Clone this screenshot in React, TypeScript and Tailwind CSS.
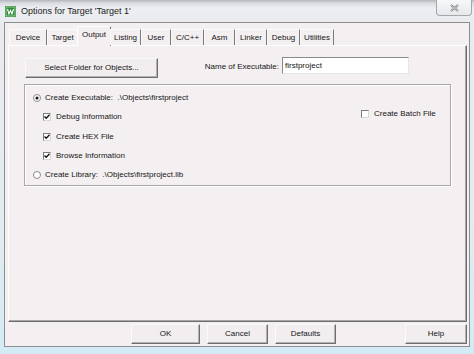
import React from "react";

const font = "font-['Liberation_Sans',Arial,sans-serif]";

function Check({ checked }: { checked: boolean }) {
  return (
    <div className="w-[8px] h-[8px] bg-white border border-t-[#7c7c7c] border-l-[#7c7c7c] border-r-[#d8d8d8] border-b-[#d8d8d8] flex items-center justify-center shrink-0">
      {checked && (
        <svg width="6" height="6" viewBox="0 0 6 6">
          <path d="M0.5 2.5 L2.2 4.3 L5.5 0.8" stroke="#111" strokeWidth="1.3" fill="none" />
        </svg>
      )}
    </div>
  );
}

function Radio({ checked }: { checked: boolean }) {
  return (
    <svg width="8" height="8" viewBox="0 0 8 8" className="shrink-0">
      <circle cx="4" cy="4" r="3.5" fill="#fff" stroke="#8a8a8a" strokeWidth="1" />
      {checked && <circle cx="4" cy="4" r="1.5" fill="#111" />}
    </svg>
  );
}

function Button({ label, w }: { label: string; w: string }) {
  return (
    <div
      className={`${w} h-[20px] flex items-center justify-center bg-[#f2eef0] border border-t-[#fbfafa] border-l-[#fbfafa] border-r-[#6f6f6f] border-b-[#6f6f6f] shadow-[inset_-1px_-1px_0_#b4b0b2]`}
    >
      {label}
    </div>
  );
}

const tabs = [
  { label: "Device", w: "w-[38px]" },
  { label: "Target", w: "w-[31px]" },
  { label: "Output", w: "w-[34px]", sel: true },
  { label: "Listing", w: "w-[31px]" },
  { label: "User", w: "w-[30px]" },
  { label: "C/C++", w: "w-[33px]" },
  { label: "Asm", w: "w-[31px]" },
  { label: "Linker", w: "w-[32px]" },
  { label: "Debug", w: "w-[33px]" },
  { label: "Utilities", w: "w-[34px]" },
];

export default function App() {
  return (
    <div className={`w-[474px] h-[354px] overflow-hidden flex flex-col bg-[linear-gradient(to_bottom,#e9ebee_0%,#e4ecf0_60%,#d3ebf5_100%)] text-[8px] text-[#151515] ${font}`}>
      {/* Title bar */}
      <div className="h-[22px] shrink-0 flex items-start bg-[linear-gradient(to_bottom,#b3b7bd_0px,#d9dce0_3px,#eceef1_8px,#e9ebee_22px)]">
        <div className="mt-[6px] ml-[5px] w-[11px] h-[11px]">
          <svg width="11" height="11" viewBox="0 0 11 11">
            <rect x="0" y="0" width="11" height="11" fill="#2f8a3a" />
            <rect x="1" y="1" width="9" height="9" fill="none" stroke="#a8d8a8" strokeWidth="0.8" />
            <path d="M2.5 3 L4 8 L5.5 4.5 L7 8 L8.5 3" stroke="#fff" strokeWidth="1.1" fill="none" />
          </svg>
        </div>
        <div className="mt-[6px] ml-[5px] text-[9px] leading-[11px] text-[#1c1c1c]">Options for Target 'Target 1'</div>
        <div className="ml-auto mr-[2px] w-[36px] h-[16px] rounded-b-[4px] border border-t-0 border-[#a4a7ac] bg-[linear-gradient(to_bottom,#f7f8f9,#e6e8eb)] flex items-center justify-center">
          <svg width="9" height="8" viewBox="0 0 9 8">
            <path d="M1 1 L8 7 M8 1 L1 7" stroke="#7a7d82" strokeWidth="2.2" />
            <path d="M1 1 L8 7 M8 1 L1 7" stroke="#ececec" strokeWidth="0.8" />
          </svg>
        </div>
      </div>

      {/* Body row */}
      <div className="flex h-[325px] shrink-0">
        <div className="w-[4px]" />
        <div className="w-[466px] h-[325px] border border-[#8e8e8e] bg-[#f4f0f2] flex flex-col">
          {/* Tabs */}
          <div className="mt-[3px] ml-[4px] h-[19px] flex items-end relative z-10">
            {tabs.map((t) =>
              t.sel ? (
                <div
                  key={t.label}
                  className={`${t.w} -mx-[1px] h-[20px] -mb-[1px] bg-[#f4f0f2] border-t border-l border-t-[#ffffff] border-l-[#ffffff] border-r border-r-[#7a7a7a] rounded-t-[1px] flex items-center justify-center pb-[3px]`}
                >
                  {t.label}
                </div>
              ) : (
                <div
                  key={t.label}
                  className={`${t.w} h-[16px] border-t border-l border-t-[#fbfafa] border-l-[#fbfafa] border-r border-r-[#7a7a7a] rounded-t-[1px] flex items-center justify-center`}
                >
                  {t.label}
                </div>
              )
            )}
          </div>

          {/* Panel */}
          <div className="ml-[3px] w-[459px] h-[277px] shrink-0 border border-t-white border-l-white border-r-[#6d6d6d] border-b-[#6d6d6d] shadow-[inset_-1px_-1px_0_#a9a5a7] flex flex-col">
            {/* Row 1 */}
            <div className="mt-[12px] ml-[16px] flex items-start">
              <Button label="Select Folder for Objects..." w="w-[133px]" />
              <div className="w-[124px] h-[17px] flex items-center justify-end pr-[3px]">Name of Executable:</div>
              <div className="w-[127px] h-[17px] -mt-[1px] bg-white border border-t-[#8a8a8a] border-l-[#8a8a8a] border-r-[#e6e6e6] border-b-[#e6e6e6] flex items-center pl-[2px]">
                firstproject
              </div>
            </div>

            {/* Group box */}
            <div className="mt-[6px] ml-[15px] w-[427px] h-[102px] border border-[#aca8aa] shadow-[inset_1px_1px_0_#ffffff,1px_1px_0_#ffffff] flex">
              <div className="w-[336px] pt-[3px] flex flex-col">
                <div className="h-[19.5px] flex items-center pl-[8px] gap-[4px]">
                  <Radio checked />
                  <span className="whitespace-pre">Create Executable:  .\Objects\firstproject</span>
                </div>
                <div className="h-[19.5px] flex items-center pl-[18px] gap-[5px]">
                  <Check checked />
                  <span>Debug Information</span>
                </div>
                <div className="h-[19.5px] flex items-center pl-[18px] gap-[5px]">
                  <Check checked />
                  <span>Create HEX File</span>
                </div>
                <div className="h-[19.5px] flex items-center pl-[18px] gap-[5px]">
                  <Check checked />
                  <span>Browse Information</span>
                </div>
                <div className="h-[19.5px] flex items-center pl-[8px] gap-[4px]">
                  <Radio checked={false} />
                  <span className="whitespace-pre">Create Library:  .\Objects\firstproject.lib</span>
                </div>
              </div>
              <div className="pt-[24px]">
                <div className="h-[10px] flex items-center gap-[5px]">
                  <Check checked={false} />
                  <span>Create Batch File</span>
                </div>
              </div>
            </div>
          </div>

          {/* Bottom buttons */}
          <div className="mt-[2px] flex">
            <div className="ml-[126px]"><Button label="OK" w="w-[69px]" /></div>
            <div className="ml-[7px]"><Button label="Cancel" w="w-[61px]" /></div>
            <div className="ml-[7px]"><Button label="Defaults" w="w-[61px]" /></div>
            <div className="ml-[69px]"><Button label="Help" w="w-[62px]" /></div>
          </div>
        </div>
        <div className="w-[4px]" />
      </div>
      <div className="flex-1" />
    </div>
  );
}
